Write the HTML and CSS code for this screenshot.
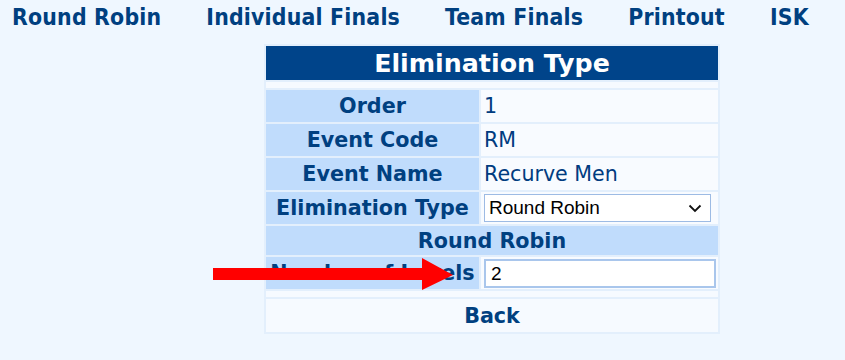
FILE: index.html
```html
<!DOCTYPE html>
<html>
<head>
<meta charset="utf-8">
<link rel="stylesheet" href="styles.css">
</head>
<body>
<nav class="menu">
  <a class="menu-item">Round Robin</a>
  <a class="menu-item">Individual Finals</a>
  <a class="menu-item">Team Finals</a>
  <a class="menu-item">Printout</a>
  <a class="menu-item">ISK</a>
</nav>
<div class="wrap">
  <table class="tabella">
    <tr><th class="title" colspan="2">Elimination Type</th></tr>
    <tr><td class="spacer" colspan="2"></td></tr>
    <tr><th class="label">Order</th><td class="value">1</td></tr>
    <tr><th class="label">Event Code</th><td class="value">RM</td></tr>
    <tr><th class="label">Event Name</th><td class="value">Recurve Men</td></tr>
    <tr><th class="label">Elimination Type</th><td class="value ctl">
      <div class="select"><span>Round Robin</span>
        <svg class="chev" width="14" height="9" viewBox="0 0 14 9"><path d="M1.5 1.5 L7 7 L12.5 1.5" fill="none" stroke="#111" stroke-width="1.8"/></svg>
      </div></td></tr>
    <tr><th class="section" colspan="2">Round Robin</th></tr>
    <tr><th class="label">Number of Levels</th><td class="value ctl"><div class="input">2</div></td></tr>
    <tr><td class="spacer" colspan="2"></td></tr>
    <tr><td class="back" colspan="2">Back</td></tr>
  </table>
  <svg class="arrow" width="245" height="34" viewBox="0 0 245 34"><path d="M0 10 L209 10 L209 0 L240 17 L209 32 L209 22 L0 22 Z" fill="#ff0000"/></svg>
</div>
</body>
</html>
```
FILE: styles.css
```css
html, body { margin: 0; padding: 0; }
body {
  background: #eff7ff;
  font-family: "DejaVu Sans", Verdana, sans-serif;
  color: #004080;
  width: 845px;
  height: 360px;
  overflow: hidden;
}
.menu {
  display: flex;
  gap: 45px;
  padding: 3px 0 0 12px;
  height: 38px;
}
.menu-item {
  font-family: "DejaVu Sans Condensed", "DejaVu Sans", sans-serif;
  font-weight: bold;
  font-size: 22.8px;
  color: #004080;
  line-height: 28px;
  letter-spacing: 0.2px;
}
.wrap {
  position: relative;
  padding-left: 264px;
  margin-top: 3px;
}
.tabella {
  border-collapse: separate;
  border-spacing: 2px;
  background: #e3effc;
  width: 456px;
  margin: 0;
}
.tabella th, .tabella td { padding: 0; }
.title {
  background: #00448a;
  color: #ffffff;
  font-size: 25.3px;
  height: 34px;
  font-weight: bold;
  text-align: center;
}
.spacer {
  background: #f6faff;
  height: 6px;
}
.label {
  background: #c0dcfc;
  width: 213px;
  height: 32px;
  font-size: 20.7px;
  font-weight: bold;
  text-align: center;
  white-space: nowrap;
}
.value {
  background: #f8fbff;
  font-size: 20.6px;
  height: 32px;
  padding-left: 3px !important;
  color: #003c80;
}
.ctl { padding-left: 3px !important; }
.select {
  display: flex;
  align-items: center;
  justify-content: space-between;
  width: 227px;
  height: 28px;
  box-sizing: border-box;
  border: 1px solid #9dbbe4;
  background: #fff;
  font-family: "Liberation Sans", Arial, sans-serif;
  font-size: 19px;
  color: #000;
  padding: 0 6px 0 4px;
}
.chev { margin-right: 2px; }
.input {
  width: 232px;
  height: 29px;
  box-sizing: border-box;
  border: 2px solid #a9c6ec;
  background: #fff;
  font-family: "Liberation Sans", Arial, sans-serif;
  font-size: 19px;
  color: #000;
  padding-left: 5px;
  line-height: 25px;
}
.section {
  background: #c0dcfc;
  height: 29px;
  font-size: 20.7px;
  font-weight: bold;
  text-align: center;
}
.back {
  background: #f6faff;
  height: 33px;
  font-size: 20.7px;
  font-weight: bold;
  text-align: center;
}
.arrow {
  position: absolute;
  left: 213px;
  top: 214px;
}
```
